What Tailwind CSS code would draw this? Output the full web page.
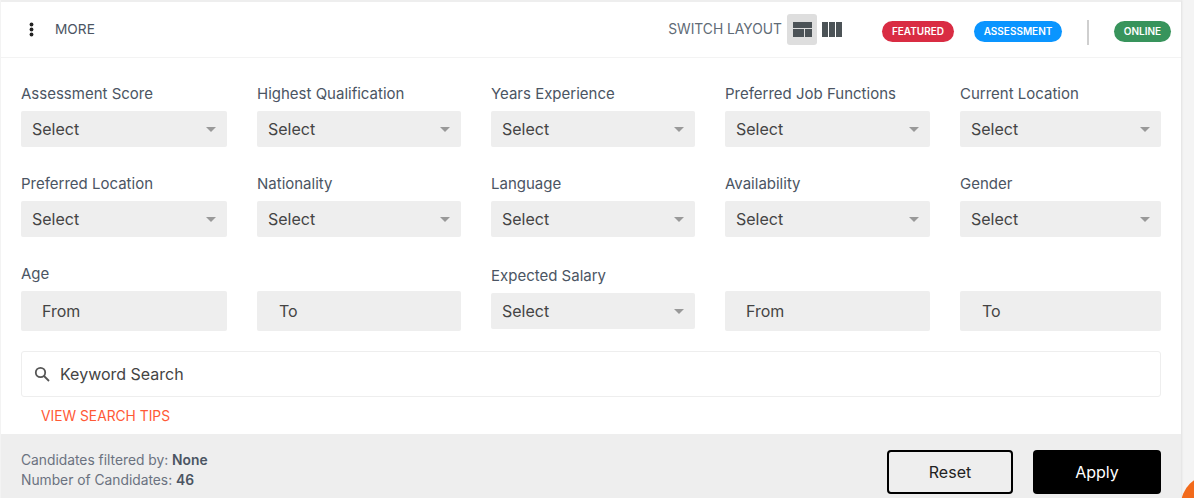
<!DOCTYPE html>
<html lang="en">
<head>
  <meta charset="UTF-8">
  <title>Filters</title>
  <script src="https://cdn.jsdelivr.net/npm/@tailwindcss/browser@4"></script>
</head>
<body class="font-['Inter','Liberation_Sans',sans-serif] text-[#4b5563]">
  <div class="relative h-[498px] w-[1194px] overflow-hidden bg-[#f4f4f4]">
  <div class="ml-px flex h-[498px] w-[1180px] flex-col border-t-2 border-[#eeeeee] bg-white shadow-[1px_0_2px_rgba(0,0,0,0.08)]">

    <!-- top bar -->
    <header class="flex h-[56px] shrink-0 items-center border-b border-[#f3f3f3] pl-[21px] pr-[10px]">
      <svg class="ml-[7px] h-[15px] w-[5px] text-[#222]" viewBox="0 0 5 15" fill="currentColor"><circle cx="2.5" cy="2.5" r="1.9"/><circle cx="2.5" cy="7.5" r="1.9"/><circle cx="2.5" cy="12.5" r="1.9"/></svg>
      <span class="ml-[21px] text-[13.7px] text-[#4b5563]">MORE</span>
      <div class="ml-auto flex items-center">
        <span class="text-[13.8px] text-[#5f6b76]">SWITCH LAYOUT</span>
        <button class="ml-[5px] flex h-[31px] w-[30px] items-center justify-center rounded-[3px] bg-[#dedede]">
          <svg class="h-[15px] w-[19px] text-[#4c5357]" viewBox="0 0 19 15" fill="currentColor"><rect width="19" height="6"/><rect y="7" width="11" height="8"/><rect x="12" y="7" width="7" height="8"/></svg>
        </button>
        <button class="ml-[5px] flex h-[31px] w-[20px] items-center justify-center">
          <svg class="h-[15px] w-[20px] text-[#4c5357]" viewBox="0 0 20 15" fill="currentColor"><rect width="6" height="15"/><rect x="7" width="6" height="15"/><rect x="14" width="6" height="15"/></svg>
        </button>
        <span class="ml-[40px] mt-[3px] flex h-[21px] w-[72px] items-center justify-center rounded-full bg-[#d92c43] text-[10px] font-semibold text-white">FEATURED</span>
        <span class="ml-[20px] mt-[3px] flex h-[21px] w-[88px] items-center justify-center rounded-full bg-[#0a95ff] text-[10px] font-semibold text-white">ASSESSMENT</span>
        <span class="ml-[25px] mt-[6px] h-[25px] w-[2px] bg-[#cfcfcf]"></span>
        <span class="ml-[25px] mt-[3px] flex h-[21px] w-[57px] items-center justify-center rounded-full bg-[#38945c] text-[10px] font-semibold text-white">ONLINE</span>
      </div>
    </header>

    <!-- filters -->
    <div class="grid grid-cols-[206px_204px_204px_205px_201px] gap-x-[30px] pl-[20px] pt-[26px] text-[15px]">
      <div class="h-[90px]"><p class="h-[27px] leading-[20px]">Assessment Score</p><div class="flex h-[36px] items-center justify-between rounded-[2px] bg-[#eeeeee] pl-[11px] pr-[11px] text-[16px] text-[#444]">Select<i class="h-0 w-0 border-x-[5px] border-t-[5px] border-x-transparent border-t-[#999]"></i></div></div>
      <div class="h-[90px]"><p class="h-[27px] leading-[20px]">Highest Qualification</p><div class="flex h-[36px] items-center justify-between rounded-[2px] bg-[#eeeeee] pl-[11px] pr-[11px] text-[16px] text-[#444]">Select<i class="h-0 w-0 border-x-[5px] border-t-[5px] border-x-transparent border-t-[#999]"></i></div></div>
      <div class="h-[90px]"><p class="h-[27px] leading-[20px]">Years Experience</p><div class="flex h-[36px] items-center justify-between rounded-[2px] bg-[#eeeeee] pl-[11px] pr-[11px] text-[16px] text-[#444]">Select<i class="h-0 w-0 border-x-[5px] border-t-[5px] border-x-transparent border-t-[#999]"></i></div></div>
      <div class="h-[90px]"><p class="h-[27px] leading-[20px]">Preferred Job Functions</p><div class="flex h-[36px] items-center justify-between rounded-[2px] bg-[#eeeeee] pl-[11px] pr-[11px] text-[16px] text-[#444]">Select<i class="h-0 w-0 border-x-[5px] border-t-[5px] border-x-transparent border-t-[#999]"></i></div></div>
      <div class="h-[90px]"><p class="h-[27px] leading-[20px]">Current Location</p><div class="flex h-[36px] items-center justify-between rounded-[2px] bg-[#eeeeee] pl-[11px] pr-[11px] text-[16px] text-[#444]">Select<i class="h-0 w-0 border-x-[5px] border-t-[5px] border-x-transparent border-t-[#999]"></i></div></div>

      <div class="h-[90px]"><p class="h-[27px] leading-[20px]">Preferred Location</p><div class="flex h-[36px] items-center justify-between rounded-[2px] bg-[#eeeeee] pl-[11px] pr-[11px] text-[16px] text-[#444]">Select<i class="h-0 w-0 border-x-[5px] border-t-[5px] border-x-transparent border-t-[#999]"></i></div></div>
      <div class="h-[90px]"><p class="h-[27px] leading-[20px]">Nationality</p><div class="flex h-[36px] items-center justify-between rounded-[2px] bg-[#eeeeee] pl-[11px] pr-[11px] text-[16px] text-[#444]">Select<i class="h-0 w-0 border-x-[5px] border-t-[5px] border-x-transparent border-t-[#999]"></i></div></div>
      <div class="h-[90px]"><p class="h-[27px] leading-[20px]">Language</p><div class="flex h-[36px] items-center justify-between rounded-[2px] bg-[#eeeeee] pl-[11px] pr-[11px] text-[16px] text-[#444]">Select<i class="h-0 w-0 border-x-[5px] border-t-[5px] border-x-transparent border-t-[#999]"></i></div></div>
      <div class="h-[90px]"><p class="h-[27px] leading-[20px]">Availability</p><div class="flex h-[36px] items-center justify-between rounded-[2px] bg-[#eeeeee] pl-[11px] pr-[11px] text-[16px] text-[#444]">Select<i class="h-0 w-0 border-x-[5px] border-t-[5px] border-x-transparent border-t-[#999]"></i></div></div>
      <div class="h-[90px]"><p class="h-[27px] leading-[20px]">Gender</p><div class="flex h-[36px] items-center justify-between rounded-[2px] bg-[#eeeeee] pl-[11px] pr-[11px] text-[16px] text-[#444]">Select<i class="h-0 w-0 border-x-[5px] border-t-[5px] border-x-transparent border-t-[#999]"></i></div></div>

      <div><p class="h-[27px] leading-[20px]">Age</p><div class="flex h-[40px] items-center rounded-[2px] bg-[#eeeeee] pl-[21px] text-[16px] text-[#444]">From</div></div>
      <div class="pt-[27px]"><div class="flex h-[40px] items-center rounded-[2px] bg-[#eeeeee] pl-[22px] text-[16px] text-[#444]">To</div></div>
      <div class="pt-[2px]"><p class="h-[27px] leading-[20px]">Expected Salary</p><div class="flex h-[36px] items-center justify-between rounded-[2px] bg-[#eeeeee] pl-[11px] pr-[11px] text-[16px] text-[#444]">Select<i class="h-0 w-0 border-x-[5px] border-t-[5px] border-x-transparent border-t-[#999]"></i></div></div>
      <div class="pt-[27px]"><div class="flex h-[40px] items-center rounded-[2px] bg-[#eeeeee] pl-[21px] text-[16px] text-[#444]">From</div></div>
      <div class="pt-[27px]"><div class="flex h-[40px] items-center rounded-[2px] bg-[#eeeeee] pl-[22px] text-[16px] text-[#444]">To</div></div>
    </div>

    <!-- keyword search -->
    <div class="ml-[20px] mt-[20px] flex h-[46px] w-[1140px] shrink-0 items-center rounded-[3px] border border-[#eeeeee] pl-[12px] text-[16px] text-[#444]">
      <svg class="h-[16px] w-[16px] text-[#555]" viewBox="0 0 16 16" fill="none" stroke="currentColor" stroke-width="1.8"><circle cx="6.5" cy="6.5" r="4.7"/><path d="M10 10l5 5"/></svg>
      <span class="ml-[10px]">Keyword Search</span>
    </div>
    <a class="ml-[40px] mt-[10px] h-[27px] text-[13.8px] leading-[18px] text-[#ff5a36]">VIEW SEARCH TIPS</a>

    <!-- footer -->
    <footer class="flex flex-1 items-start justify-between bg-[#eeeeee] px-[20px] pt-[16px]">
      <div class="text-[13.8px] leading-[20px] text-[#6b7280]">
        <p>Candidates filtered by: <b class="font-semibold text-[#4b5563]">None</b></p>
        <p>Number of Candidates: <b class="font-semibold text-[#4b5563]">46</b></p>
      </div>
      <div class="flex gap-[20px]">
        <button class="h-[44px] w-[126px] rounded-[4px] border-2 border-black text-[16px] text-[#222]">Reset</button>
        <button class="h-[44px] w-[128px] rounded-[4px] bg-black text-[16px] text-white">Apply</button>
      </div>
    </footer>
  </div>
  <div class="absolute left-[1181px] top-[475px] h-[60px] w-[60px] rounded-full bg-[#f26a1b]"></div>
  </div>
</body>
</html>
